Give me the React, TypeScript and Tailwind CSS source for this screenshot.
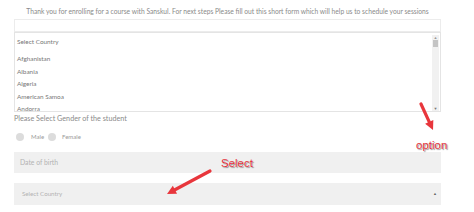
import React from 'react';

const countries = ['Afghanistan', 'Albania', 'Algeria', 'American Samoa', 'Andorra'];

function Arrow({ x1, y1, x2, y2 }: { x1: number; y1: number; x2: number; y2: number }) {
  const ang = Math.atan2(y2 - y1, x2 - x1);
  const len = 9;
  const w = 4.5;
  const bx = x2 - Math.cos(ang) * len;
  const by = y2 - Math.sin(ang) * len;
  const px = -Math.sin(ang) * w;
  const py = Math.cos(ang) * w;
  return (
    <g>
      <line x1={x1} y1={y1} x2={bx} y2={by} stroke="#e8363c" strokeWidth={3.2} strokeLinecap="round" />
      <polygon points={`${x2},${y2} ${bx + px},${by + py} ${bx - px},${by - py}`} fill="#e8363c" />
    </g>
  );
}

export default function App() {
  return (
    <div className="relative w-[474px] h-[212px] bg-white overflow-hidden" style={{ fontFamily: 'Lato, "Open Sans", sans-serif' }}>
      <div className="ml-[14px] w-[427px] pt-[6px]">
        {/* intro */}
        <p className="text-center whitespace-nowrap text-[6.7px] leading-[10px] text-[#8a8a8a]">
          Thank you for enrolling for a course with Sanskul. For next steps Please fill out this short form which will help us to schedule your sessions
        </p>

        {/* empty text input */}
        <div className="mt-[3px] h-[13px] border border-[#ececec] bg-white" />

        {/* open country list */}
        <div className="flex h-[80px] border border-[#e4e4e4] bg-white overflow-hidden">
          <div className="flex-1 pl-[2px] text-[6.4px] text-[#777]">
            <div className="h-[11px] mt-[3px] leading-[11px]">Select Country</div>
            <div className="mt-[6px] flex flex-col">
              {countries.map((c) => (
                <div key={c} className="h-[12.6px] leading-[12.6px]">{c}</div>
              ))}
            </div>
          </div>
          <div className="w-[7px] mr-[1px] mt-[2px] bg-[#f1f1f1] flex flex-col items-center">
            <div className="text-[4px] leading-[5px] text-[#999]">▲</div>
            <div className="w-[5px] h-[7px] bg-[#c4c4c4]" />
            <div className="flex-1" />
            <div className="text-[4px] leading-[5px] text-[#777]">▼</div>
          </div>
        </div>

        {/* gender */}
        <p className="mt-[2px] text-[7.2px] leading-[10px] text-[#8a8a8a]">Please Select Gender of the student</p>
        <div className="mt-[8px] flex items-center text-[6px] text-[#9a9a9a]">
          <span className="w-[8px] h-[8px] rounded-full bg-[#dcdcdc] ml-[2px]" />
          <span className="ml-[7px]">Male</span>
          <span className="w-[8px] h-[8px] rounded-full bg-[#dcdcdc] ml-[4px]" />
          <span className="ml-[6px]">Female</span>
        </div>

        {/* date of birth */}
        <div className="mt-[11px] h-[21px] bg-[#f0f0f0] flex items-center pl-[6px] text-[6.8px] text-[#b3b3b3]">
          Date of birth
        </div>

        {/* country select */}
        <div className="mt-[10px] h-[22px] bg-[#f0f0f0] flex items-center justify-between pl-[8px] pr-[4px] text-[6.2px] text-[#b3b3b3]">
          <span>Select Country</span>
          <span className="text-[4px] text-[#666]">▲</span>
        </div>
      </div>

      {/* annotations */}
      <svg className="absolute left-0 top-0 pointer-events-none" width={474} height={212}>
        <Arrow x1={421} y1={104} x2={433} y2={130} />
        <Arrow x1={210} y1={171} x2={167} y2={194} />
      </svg>
      <div
        className="absolute left-[416px] top-[139px] text-[11.5px] leading-[12px] text-[#e3313a]"
        style={{ fontFamily: '"Liberation Sans", Arial, sans-serif', textShadow: '0 0 1px #fff, 1px 1px 1px #888' }}
      >
        option
      </div>
      <div
        className="absolute left-[221px] top-[157px] text-[11.5px] leading-[12px] text-[#e3313a]"
        style={{ fontFamily: '"Liberation Sans", Arial, sans-serif', textShadow: '0 0 1px #fff, 1px 1px 1px #888' }}
      >
        Select
      </div>
    </div>
  );
}
